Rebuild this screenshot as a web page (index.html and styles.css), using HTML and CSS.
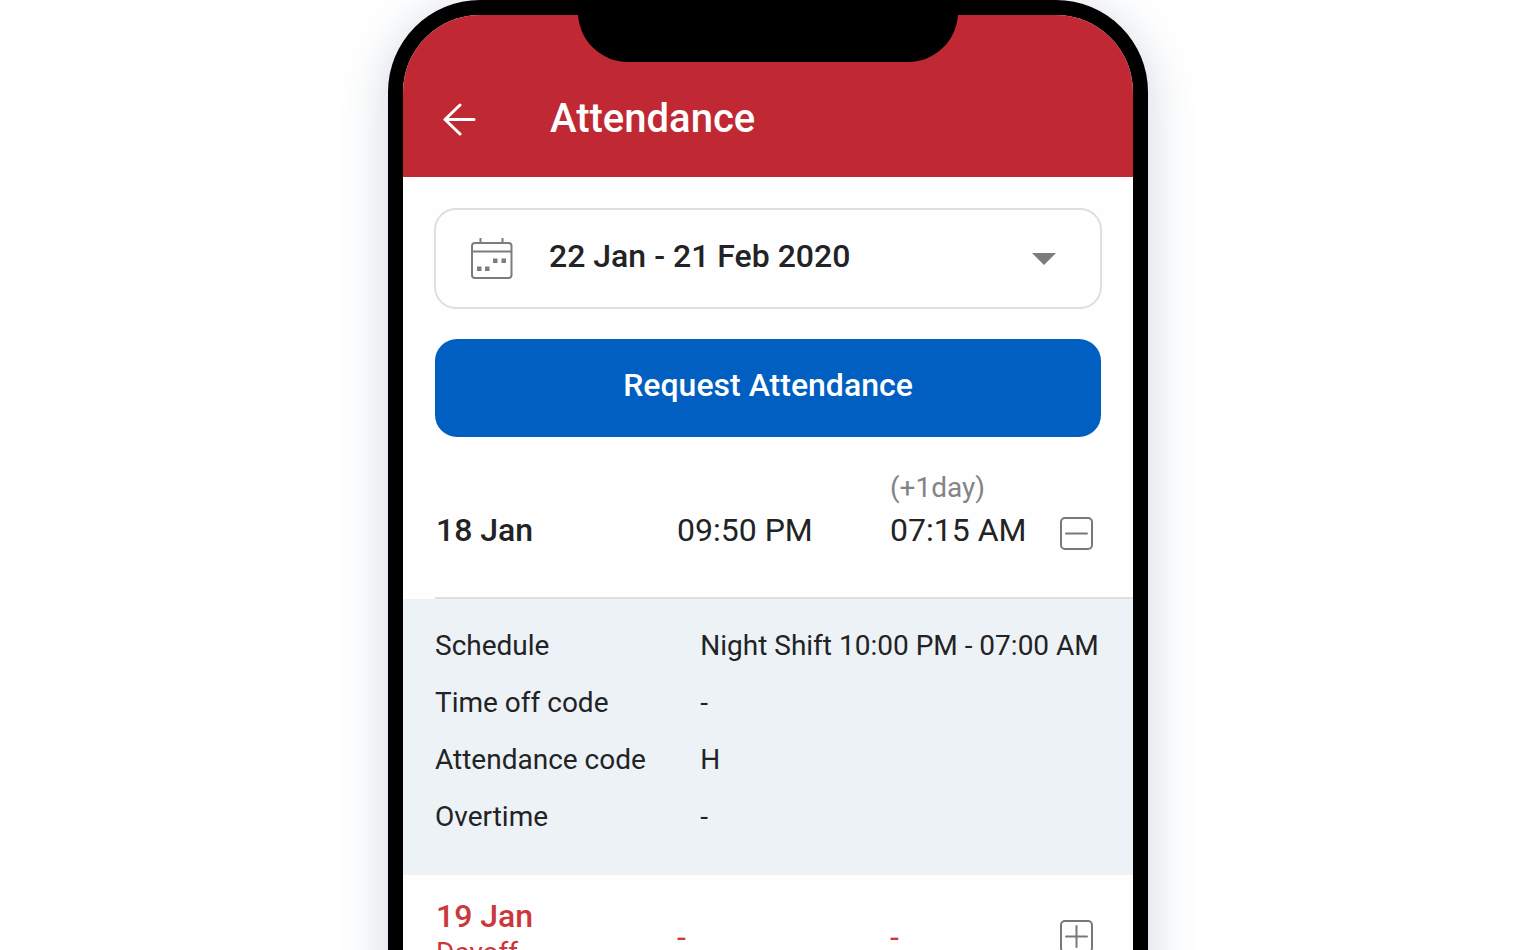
FILE: index.html
```html
<!DOCTYPE html>
<html lang="en">
<head>
<meta charset="utf-8">
<meta name="viewport" content="width=device-width, initial-scale=1">
<title>Attendance</title>
<link rel="stylesheet" href="styles.css">
</head>
<body>
<main class="stage">
  <div class="phone">
    <div class="notch"></div>
    <div class="screen">
      <header class="appbar">
        <button class="back" type="button" aria-label="Back">
          <svg width="34" height="34" viewBox="0 0 34 34" fill="none" stroke="#fff" stroke-width="3" stroke-linecap="round" stroke-linejoin="round"><path d="M31 17.500H2M17 3 2 17.500l15 14.500"/></svg>
        </button>
        <h1 class="title">Attendance</h1>
      </header>

      <section class="controls">
        <div class="period">
          <svg class="calendar" width="42" height="42" viewBox="0 0 42 42" fill="none" stroke="#7b7c7e" stroke-width="2"><rect x="1" y="5" width="39.500" height="35" rx="3"/><path d="M1 13.500h40M9.500 0v5M31.500 0v5"/><path fill="#7b7c7e" stroke="none" d="M6 28.500h4.500V33H6zM14 28.500h4.500V33H14zM22 20.500h4.500V25H22zM30.500 20.500H35V25h-4.500z"/></svg>
          <select class="period-select" aria-label="Attendance period">
            <option>22 Jan - 21 Feb 2020</option>
          </select>
          <svg class="caret" width="24" height="12" viewBox="0 0 24 12"><path fill="#7b7c7e" d="M0 0h24L12 12z"/></svg>
        </div>
        <button class="request" type="button">Request Attendance</button>
      </section>

      <section class="day">
        <div class="date">18 Jan</div>
        <div class="time">09:50 PM</div>
        <div class="time"><span class="note">(+1day)</span>07:15 AM</div>
        <button class="toggle" type="button" aria-label="Hide details for 18 Jan" aria-expanded="true">
          <svg width="34" height="34" viewBox="0 0 34 34" fill="none" stroke="#77787a" stroke-width="2" stroke-linecap="round"><rect x="1" y="1" width="31" height="31" rx="4"/><path d="M6 16.500h21"/></svg>
        </button>
      </section>

      <table class="details">
        <tbody>
          <tr><th scope="row">Schedule</th><td>Night Shift 10:00 PM - 07:00 AM</td></tr>
          <tr><th scope="row">Time off code</th><td>-</td></tr>
          <tr><th scope="row">Attendance code</th><td>H</td></tr>
          <tr><th scope="row">Overtime</th><td>-</td></tr>
        </tbody>
      </table>

      <section class="day day-off">
        <div class="date">19 Jan<span class="kind">Dayoff</span></div>
        <div class="time">-</div>
        <div class="time">-</div>
        <button class="toggle" type="button" aria-label="Show details for 19 Jan" aria-expanded="false">
          <svg width="34" height="34" viewBox="0 0 34 34" fill="none" stroke="#77787a" stroke-width="2" stroke-linecap="round"><rect x="1" y="1" width="31" height="31" rx="4"/><path d="M6 16.500h21M16.500 6v21"/></svg>
        </button>
      </section>
    </div>
  </div>
</main>
</body>
</html>
```
FILE: styles.css
```css
* { box-sizing: border-box; }

body {
  margin: 0;
  background: #fff;
  color: #222325;
  font-family: Roboto, "Liberation Sans", sans-serif;
}

button, select {
  border: 0;
  padding: 0;
  background: none;
  color: inherit;
  font: inherit;
}

.stage {
  display: flex;
  justify-content: center;
  height: 100vh;
  overflow: hidden;
}

.phone {
  position: relative;
  flex: none;
  width: 100%;
  max-width: 760px;
  min-height: 130vh;
  border-radius: 92px;
  padding: 15px;
  background: #000;
  box-shadow: 0 8px 48px rgba(50, 80, 120, 0.24);
}

.notch {
  position: absolute;
  top: 0;
  left: 25%;
  right: 25%;
  height: 62px;
  border-radius: 0 0 50px 50px;
  background: #000;
}

.screen {
  min-height: 100%;
  border-radius: 77px;
  overflow: hidden;
  background: #fefefe;
}

.appbar {
  display: flex;
  align-items: center;
  gap: 73px;
  height: 162px;
  padding: 46px 40px 0;
  background: #c02933;
  color: #fff;
}

.back, .toggle { display: flex; }

.title {
  margin: 0;
  font-size: 40px;
  line-height: 48px;
  font-weight: 500;
}

.controls {
  display: grid;
  gap: 30px;
  padding: 31px 31px 0;
}

.period {
  display: flex;
  align-items: center;
  height: 101px;
  padding: 0 44px 0 35px;
  border: 2px solid #dddde3;
  border-radius: 22px;
}

.period-select {
  flex: 1;
  height: 100%;
  padding: 0 0 6px 36px;
  appearance: none;
  font-size: 32px;
  font-weight: 500;
}

.request {
  height: 98px;
  margin: 0 1px;
  padding-bottom: 6px;
  border-radius: 22px;
  background: #005fc0;
  color: #fff;
  font-size: 32px;
  font-weight: 500;
}

.day {
  display: grid;
  grid-template-columns: 241fr 213fr 170fr 41fr;
  align-items: end;
  margin-left: 32px;
  padding: 30px 32px 46px 1px;
  border-bottom: 2px solid #dddfe5;
  font-size: 32px;
  line-height: 42px;
}

.date { font-weight: 500; }

.note {
  display: block;
  color: #838486;
  font-size: 28px;
}

.details {
  width: 100%;
  padding: 18px 0 30px 32px;
  border-spacing: 0;
  background: #edf2f7;
  font-size: 28px;
  line-height: 57px;
}

.details th, .details td {
  padding: 0;
  font-weight: 400;
  text-align: left;
  white-space: nowrap;
}

.details th { width: 38%; }

.day-off {
  align-items: center;
  padding-top: 20px;
  color: #cb373d;
}

.kind {
  display: block;
  padding-bottom: 10px;
  font-size: 28px;
  line-height: 32px;
  font-weight: 400;
}
```
